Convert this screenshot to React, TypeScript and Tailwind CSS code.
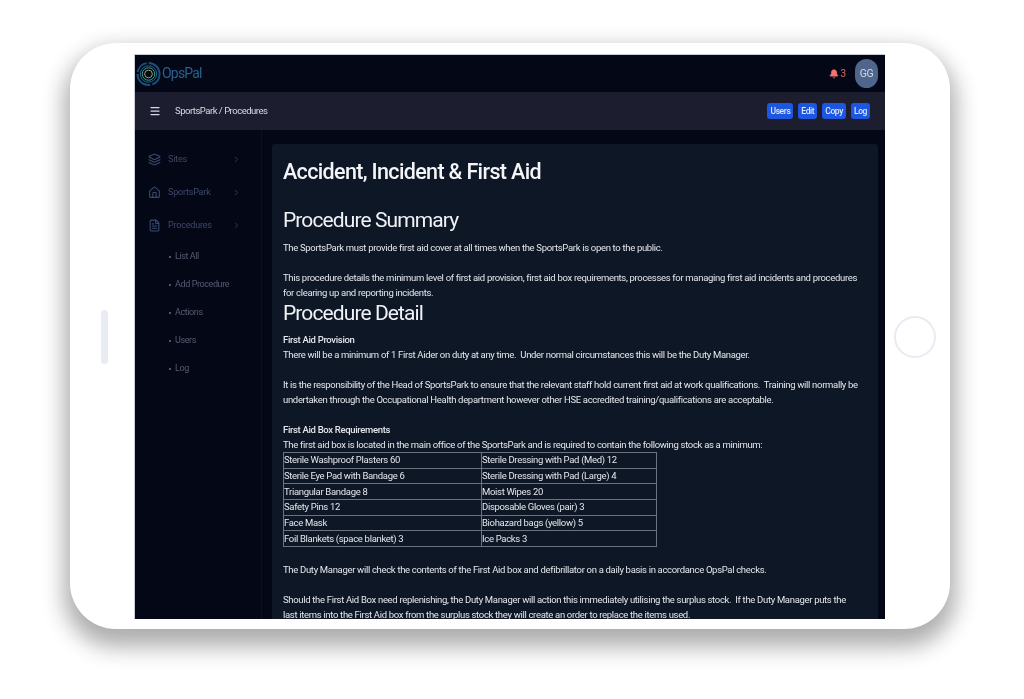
import { Bell, ChevronRight, FileText, Home, Layers, Menu } from "lucide-react";

const font = "font-['Roboto',sans-serif]";

const nav = [
  { label: "Sites", icon: Layers },
  { label: "SportsPark", icon: Home },
  { label: "Procedures", icon: FileText },
];

const subNav = ["List All", "Add Procedure", "Actions", "Users", "Log"];

const stock = [
  ["Sterile Washproof Plasters 60", "Sterile Dressing with Pad (Med) 12"],
  ["Sterile Eye Pad with Bandage 6", "Sterile Dressing with Pad (Large) 4"],
  ["Triangular Bandage 8", "Moist Wipes 20"],
  ["Safety Pins 12", "Disposable Gloves (pair) 3"],
  ["Face Mask", "Biohazard bags (yellow) 5"],
  ["Foil Blankets (space blanket) 3", "Ice Packs 3"],
];

function Logo() {
  return (
    <svg width="25" height="28" viewBox="0 0 26 28" fill="none">
      <circle cx="13" cy="14" r="11.5" stroke="#1d4f7c" strokeWidth="2" strokeDasharray="14 2 20 2" />
      <circle cx="13" cy="14" r="8.5" stroke="#1f6f8f" strokeWidth="1" />
      <circle cx="13" cy="14" r="6.5" stroke="#3f9f8f" strokeWidth="1" />
      <circle cx="13" cy="14" r="4" stroke="#9aa86a" strokeWidth="1" />
    </svg>
  );
}

export default function App() {
  return (
    <div className={`h-[699px] w-[1024px] overflow-hidden bg-white pt-[43px] pl-[70px] ${font}`}>
      <div className="flex h-[586px] w-[880px] items-start rounded-[46px] bg-white pt-[11px] shadow-[0_12px_22px_6px_rgba(0,0,0,0.32)]">
        <div className="flex h-[565px] w-[64px] shrink-0 pt-[256px] pl-[31px]">
          <div className="h-[54px] w-[7px] rounded-full bg-[#e8ebf2]" />
        </div>

        <div className="flex h-[565px] w-[751px] shrink-0 flex-col overflow-hidden border-t border-l border-[#c9ccd6] bg-[#040716] blur-[0.35px]">
          <header className="flex h-[37px] shrink-0 items-center justify-between pr-[7px] pl-px">
            <div className="flex items-center gap-px">
              <Logo />
              <span className="text-[14px] tracking-[-0.8px] text-[#27618f]">OpsPal</span>
            </div>
            <div className="flex items-center gap-[9px]">
              <div className="flex items-center gap-0.5 text-[10px] tracking-[-0.2px] text-[#e8615a]">
                <Bell size={10} fill="#f87171" className="text-[#f87171]" />
                3
              </div>
              <div className="flex h-[29px] w-[23px] items-center justify-center rounded-full bg-[#4f658c] text-[10.5px] tracking-[-0.3px] text-[#d5dbe6]">
                GG
              </div>
            </div>
          </header>

          <div className="flex h-[38px] shrink-0 items-center justify-between bg-[#1c1e30] pr-[15px] pl-[14px]">
            <div className="flex items-center gap-[14px]">
              <Menu size={12} strokeWidth={2.5} className="text-[#d8dae0]" />
              <span className="text-[9.5px] tracking-[-0.5px] text-[#d8dae0]">SportsPark / Procedures</span>
            </div>
            <div className="flex gap-[5px]">
              {["Users", "Edit", "Copy", "Log"].map((b) => (
                <span key={b} className="flex h-4 items-center rounded-[3px] bg-[#1d56e0] px-[3px] text-[8.5px] font-medium tracking-[-0.4px] text-[#dfe6f5]">
                  {b}
                </span>
              ))}
            </div>
          </div>

          <div className="flex min-h-0 flex-1">
            <aside className="w-[127px] shrink-0 border-r border-[#0c1020] pt-[22px] pl-[13px]">
              {nav.map(({ label, icon: Icon }) => (
                <div key={label} className="mb-[18px] flex h-[15px] items-center text-[#3a4a70]">
                  <Icon size={13} />
                  <span className="ml-[7px] w-[64px] text-[9px] tracking-[-0.2px] text-[#3d4968]">{label}</span>
                  <ChevronRight size={9} />
                </div>
              ))}
              <ul className="mt-[14px] flex flex-col gap-[17.1px] pl-[21px]">
                {subNav.map((s) => (
                  <li key={s} className="flex h-[11px] items-center gap-[4px] text-[9px] tracking-[-0.4px] text-[#555c70]">
                    <span className="h-[2px] w-[2px] rounded-full bg-[#6a7286]" />
                    {s}
                  </li>
                ))}
              </ul>
            </aside>

            <div className="min-w-0 flex-1 pt-[14px] pr-[7px] pl-[10px]">
              <main className="h-[480px] overflow-hidden rounded-t-[3px] bg-[#0e1726] pt-[12px] pr-[10px] pl-[11px] text-[9.5px] leading-[15px] tracking-[-0.32px] text-[#e4e7ec]">
                <h1 className="mb-[17px] text-[21.5px] leading-[32px] font-medium tracking-[-0.65px] text-[#f4f5f7]">Accident, Incident &amp; First Aid</h1>
                <h2 className="mb-[5px] text-[21px] leading-[30px] tracking-[-0.9px] text-[#f0f2f5]">Procedure Summary</h2>
                <p>The SportsPark must provide first aid cover at all times when the SportsPark is open to the public.</p>
                <p className="mt-[15px]">
                  This procedure details the minimum level of first aid provision, first aid box requirements, processes for managing first aid incidents and procedures for clearing up and reporting incidents.
                </p>
                <h2 className="mb-[6px] text-[21px] leading-[26px] tracking-[-0.9px] text-[#f0f2f5]">Procedure Detail</h2>
                <p className="font-medium">First Aid Provision</p>
                <p>There will be a minimum of 1 First Aider on duty at any time.&nbsp; Under normal circumstances this will be the Duty Manager.</p>
                <p className="mt-[15px]">
                  It is the responsibility of the Head of SportsPark to ensure that the relevant staff hold current first aid at work qualifications.&nbsp; Training will normally be undertaken through the Occupational Health department however other HSE accredited training/qualifications are acceptable.
                </p>
                <p className="mt-[15px] font-medium">First Aid Box Requirements</p>
                <p>The first aid box is located in the main office of the SportsPark and is required to contain the following stock as a minimum:</p>
                <table className="w-[374px] table-fixed border-collapse border border-[#6b7280]">
                  <tbody>
                    {stock.map((row) => (
                      <tr key={row[0]} className="h-[15.7px]">
                        {row.map((cell, i) => (
                          <td key={cell} className={`border border-[#6b7280] px-0 py-0 leading-[14px] ${i === 0 ? "w-[198px]" : ""}`}>
                            {cell}
                          </td>
                        ))}
                      </tr>
                    ))}
                  </tbody>
                </table>
                <p className="mt-[15px]">The Duty Manager will check the contents of the First Aid box and defibrillator on a daily basis in accordance OpsPal checks.</p>
                <p className="mt-[15px]">
                  Should the First Aid Box need replenishing, the Duty Manager will action this immediately utilising the surplus stock.&nbsp; If the Duty Manager puts the
                  <br />
                  last items into the First Aid box from the surplus stock they will create an order to replace the items used.
                </p>
              </main>
            </div>
          </div>
        </div>

        <div className="flex h-[565px] flex-1 pt-[262px] pl-[9px]">
          <div className="h-[42px] w-[42px] rounded-full border-2 border-[#e8ebf2]" />
        </div>
      </div>
    </div>
  );
}
